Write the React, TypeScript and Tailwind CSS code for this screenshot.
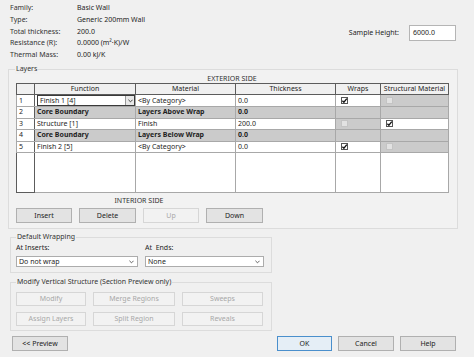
import React from "react";

type Row = {
  n: string;
  fn: string;
  mat: string;
  thick: string;
  core?: boolean;
  wraps: "on" | "off" | "none";
  struct: "on" | "off" | "none";
};

const rows: Row[] = [
  { n: "1", fn: "Finish 1 [4]", mat: "<By Category>", thick: "0.0", wraps: "on", struct: "off" },
  { n: "2", fn: "Core Boundary", mat: "Layers Above Wrap", thick: "0.0", core: true, wraps: "none", struct: "none" },
  { n: "3", fn: "Structure [1]", mat: "Finish", thick: "200.0", wraps: "off", struct: "on" },
  { n: "4", fn: "Core Boundary", mat: "Layers Below Wrap", thick: "0.0", core: true, wraps: "none", struct: "none" },
  { n: "5", fn: "Finish 2 [5]", mat: "<By Category>", thick: "0.0", wraps: "on", struct: "off" },
];

function Check({ state }: { state: "on" | "off" | "none" }) {
  if (state === "none") return null;
  if (state === "off")
    return <span className="ml-[3px] block w-[7px] h-[7px] border border-[#c4c4c4] bg-[#e2e2e2]" />;
  return (
    <span className="ml-[3px] block w-[7px] h-[7px] border border-[#555] bg-white relative">
      <svg viewBox="0 0 7 7" className="absolute -top-[1px] -left-[1px] w-[7px] h-[7px]">
        <path d="M1.4 3.7 L2.9 5.2 L5.8 1.6" fill="none" stroke="#111" strokeWidth="1.3" />
      </svg>
    </span>
  );
}

function Btn({ label, w, disabled, ok }: { label: string; w: string; disabled?: boolean; ok?: boolean }) {
  return (
    <div
      className={`${w} h-full flex items-center justify-center border ${
        disabled
          ? "border-[#d6d6d6] bg-[#f2f2f2] text-[#a8a8a8]"
          : ok
          ? "border-[#4a8fcc] bg-[#e5eef6] text-[#222]"
          : "border-[#b0b0b0] bg-[#e3e3e3] text-[#222]"
      }`}
    >
      {label}
    </div>
  );
}

function Select({ value, w }: { value: string; w: string }) {
  return (
    <div className={`${w} h-[11px] border border-[#acacac] bg-white flex items-center justify-between pl-[2px] pr-[3px]`}>
      <span>{value}</span>
      <svg viewBox="0 0 6 4" className="w-[5px] h-[4px]">
        <path d="M0.5 0.5 L3 3 L5.5 0.5" fill="none" stroke="#444" strokeWidth="1" />
      </svg>
    </div>
  );
}

export default function App() {
  const info = [
    ["Family:", "Basic Wall"],
    ["Type:", "Generic 200mm Wall"],
    ["Total thickness:", "200.0"],
    ["Resistance (R):", "0.0000 (m²·K)/W"],
    ["Thermal Mass:", "0.00 kJ/K"],
  ];

  return (
    <div
      className="w-[474px] h-[357px] overflow-hidden bg-[#f0f0f0] text-[#1e1e1e] text-[7px] leading-[10px]"
      style={{ fontFamily: '"Noto Sans", "Open Sans", sans-serif' }}
    >
      {/* header info */}
      <div className="h-[69px] flex">
        <div className="pl-[10px] pt-[2px] leading-[11.8px]">
          {info.map(([k, v]) => (
            <div key={k} className="flex">
              <span className="w-[67px] text-[#333]">{k}</span>
              <span>{v}</span>
            </div>
          ))}
        </div>
        <div className="ml-auto mr-[18px] mt-[25px] h-[16px] flex items-center">
          <span className="mr-[10px]">Sample Height:</span>
          <div className="w-[47px] h-[16px] border border-[#b5b5b5] bg-white pl-[3px] flex items-center">6000.0</div>
        </div>
      </div>

      {/* Layers */}
      <div className="ml-[8px] w-[450px] h-[160px] border border-[#dcdcdc] bg-[#f2f2f2]">
        <div className="-mt-[6px] ml-[6px] w-fit px-[1px] h-[10px] bg-[#f0f0f0] text-[#333]">Layers</div>
        <div className="ml-[7px] w-[432px] text-center leading-[9px] text-[#333]">EXTERIOR SIDE</div>
        <table className="ml-[7px] w-[432px] table-fixed border-collapse border border-[#5c5c5c]">
          <colgroup>
            <col className="w-[18px]" />
            <col className="w-[101px]" />
            <col className="w-[100px]" />
            <col className="w-[100px]" />
            <col className="w-[45px]" />
            <col className="w-[68px]" />
          </colgroup>
          <thead>
            <tr className="h-[10px] bg-[#f0f0f0]">
              <th className="border border-[#5c5c5c] p-0 font-normal" />
              <th className="border border-[#5c5c5c] p-0 font-normal">Function</th>
              <th className="border border-[#5c5c5c] p-0 font-normal">Material</th>
              <th className="border border-[#5c5c5c] p-0 font-normal">Thickness</th>
              <th className="border border-[#5c5c5c] p-0 font-normal">Wraps</th>
              <th className="border border-[#5c5c5c] p-0 font-normal whitespace-nowrap">Structural Material</th>
            </tr>
          </thead>
          <tbody>
            {rows.map((r) => {
              const base = r.core ? "bg-[#cbcbcb] font-bold" : "bg-white";
              const cell = "border border-[#a8a8a8] p-0 pl-[2px] h-[11.5px] whitespace-nowrap overflow-hidden";
              const chk = (s: Row["wraps"]) =>
                s === "on" ? "bg-white" : "bg-[#cbcbcb]";
              return (
                <tr key={r.n} className={base}>
                  <td className="border border-[#a8a8a8] border-r-[#5c5c5c] p-0 pl-[2px] bg-white font-normal">{r.n}</td>
                  {r.n === "1" ? (
                    <td className={`${cell} pl-0`}>
                      <div className="h-[11px] border border-[#3a3a3a] flex items-center justify-between pl-[2px]">
                        <span>{r.fn}</span>
                        <span className="w-[9px] h-[9px] border-l border-[#999] bg-[#e8e8e8] flex items-center justify-center">
                          <svg viewBox="0 0 6 4" className="w-[5px] h-[4px]">
                            <path d="M0.5 0.5 L3 3 L5.5 0.5" fill="none" stroke="#333" strokeWidth="1.1" />
                          </svg>
                        </span>
                      </div>
                    </td>
                  ) : (
                    <td className={cell}>{r.fn}</td>
                  )}
                  <td className={cell}>{r.mat}</td>
                  <td className={cell}>{r.thick}</td>
                  <td className={`${cell} ${r.core ? "" : chk(r.wraps)}`}>
                    <Check state={r.wraps} />
                  </td>
                  <td className={`${cell} ${r.core ? "" : chk(r.struct)}`}>
                    <Check state={r.struct} />
                  </td>
                </tr>
              );
            })}
            <tr className="h-[40px] bg-white">
              <td className="border border-[#5c5c5c] p-0" />
              <td className="border border-[#a8a8a8] p-0" />
              <td className="border border-[#a8a8a8] p-0" />
              <td className="border border-[#a8a8a8] p-0" />
              <td className="border border-[#a8a8a8] p-0" />
              <td className="border border-[#a8a8a8] p-0" />
            </tr>
          </tbody>
        </table>
        <div className="ml-[7px] w-[246px] text-center leading-[15px] text-[#333]">INTERIOR SIDE</div>
        <div className="ml-[7px] h-[15px] flex gap-[7px]">
          <Btn label="Insert" w="w-[56px]" />
          <Btn label="Delete" w="w-[57px]" />
          <Btn label="Up" w="w-[56px]" disabled />
          <Btn label="Down" w="w-[57px]" />
        </div>
      </div>

      {/* Default Wrapping */}
      <div className="ml-[10px] mt-[8px] w-[262px] h-[36px] border border-[#dcdcdc]">
        <div className="-mt-[6px] ml-[5px] w-fit px-[1px] h-[10px] bg-[#f0f0f0] text-[#333]">Default Wrapping</div>
        <div className="flex gap-[7px] pl-[5px] mt-[1px]">
          <div>
            <div className="leading-[10px]">At Inserts:</div>
            <div className="mt-[3px]">
              <Select value="Do not wrap" w="w-[122px]" />
            </div>
          </div>
          <div>
            <div className="leading-[10px]">At&nbsp; Ends:</div>
            <div className="mt-[3px]">
              <Select value="None" w="w-[119px]" />
            </div>
          </div>
        </div>
      </div>

      {/* Modify Vertical Structure */}
      <div className="ml-[10px] mt-[9px] w-[262px] h-[49px] border border-[#dcdcdc]">
        <div className="-mt-[6px] ml-[5px] w-fit px-[1px] h-[10px] bg-[#f0f0f0] text-[#333]">
          Modify Vertical Structure (Section Preview only)
        </div>
        <div className="pl-[5px] mt-[5px] flex flex-col gap-[6px]">
          <div className="h-[14px] flex gap-[7px]">
            <Btn label="Modify" w="w-[70px]" disabled />
            <Btn label="Merge Regions" w="w-[82px]" disabled />
            <Btn label="Sweeps" w="w-[81px]" disabled />
          </div>
          <div className="h-[14px] flex gap-[7px]">
            <Btn label="Assign Layers" w="w-[70px]" disabled />
            <Btn label="Split Region" w="w-[82px]" disabled />
            <Btn label="Reveals" w="w-[81px]" disabled />
          </div>
        </div>
      </div>

      {/* footer */}
      <div className="mt-[5px] h-[15px] flex">
        <div className="ml-[12px] h-full">
          <Btn label="<< Preview" w="w-[56px]" />
        </div>
        <div className="ml-auto mr-[18px] h-full flex gap-[6px]">
          <Btn label="OK" w="w-[55px]" ok />
          <Btn label="Cancel" w="w-[56px]" />
          <Btn label="Help" w="w-[56px]" />
        </div>
      </div>
    </div>
  );
}
